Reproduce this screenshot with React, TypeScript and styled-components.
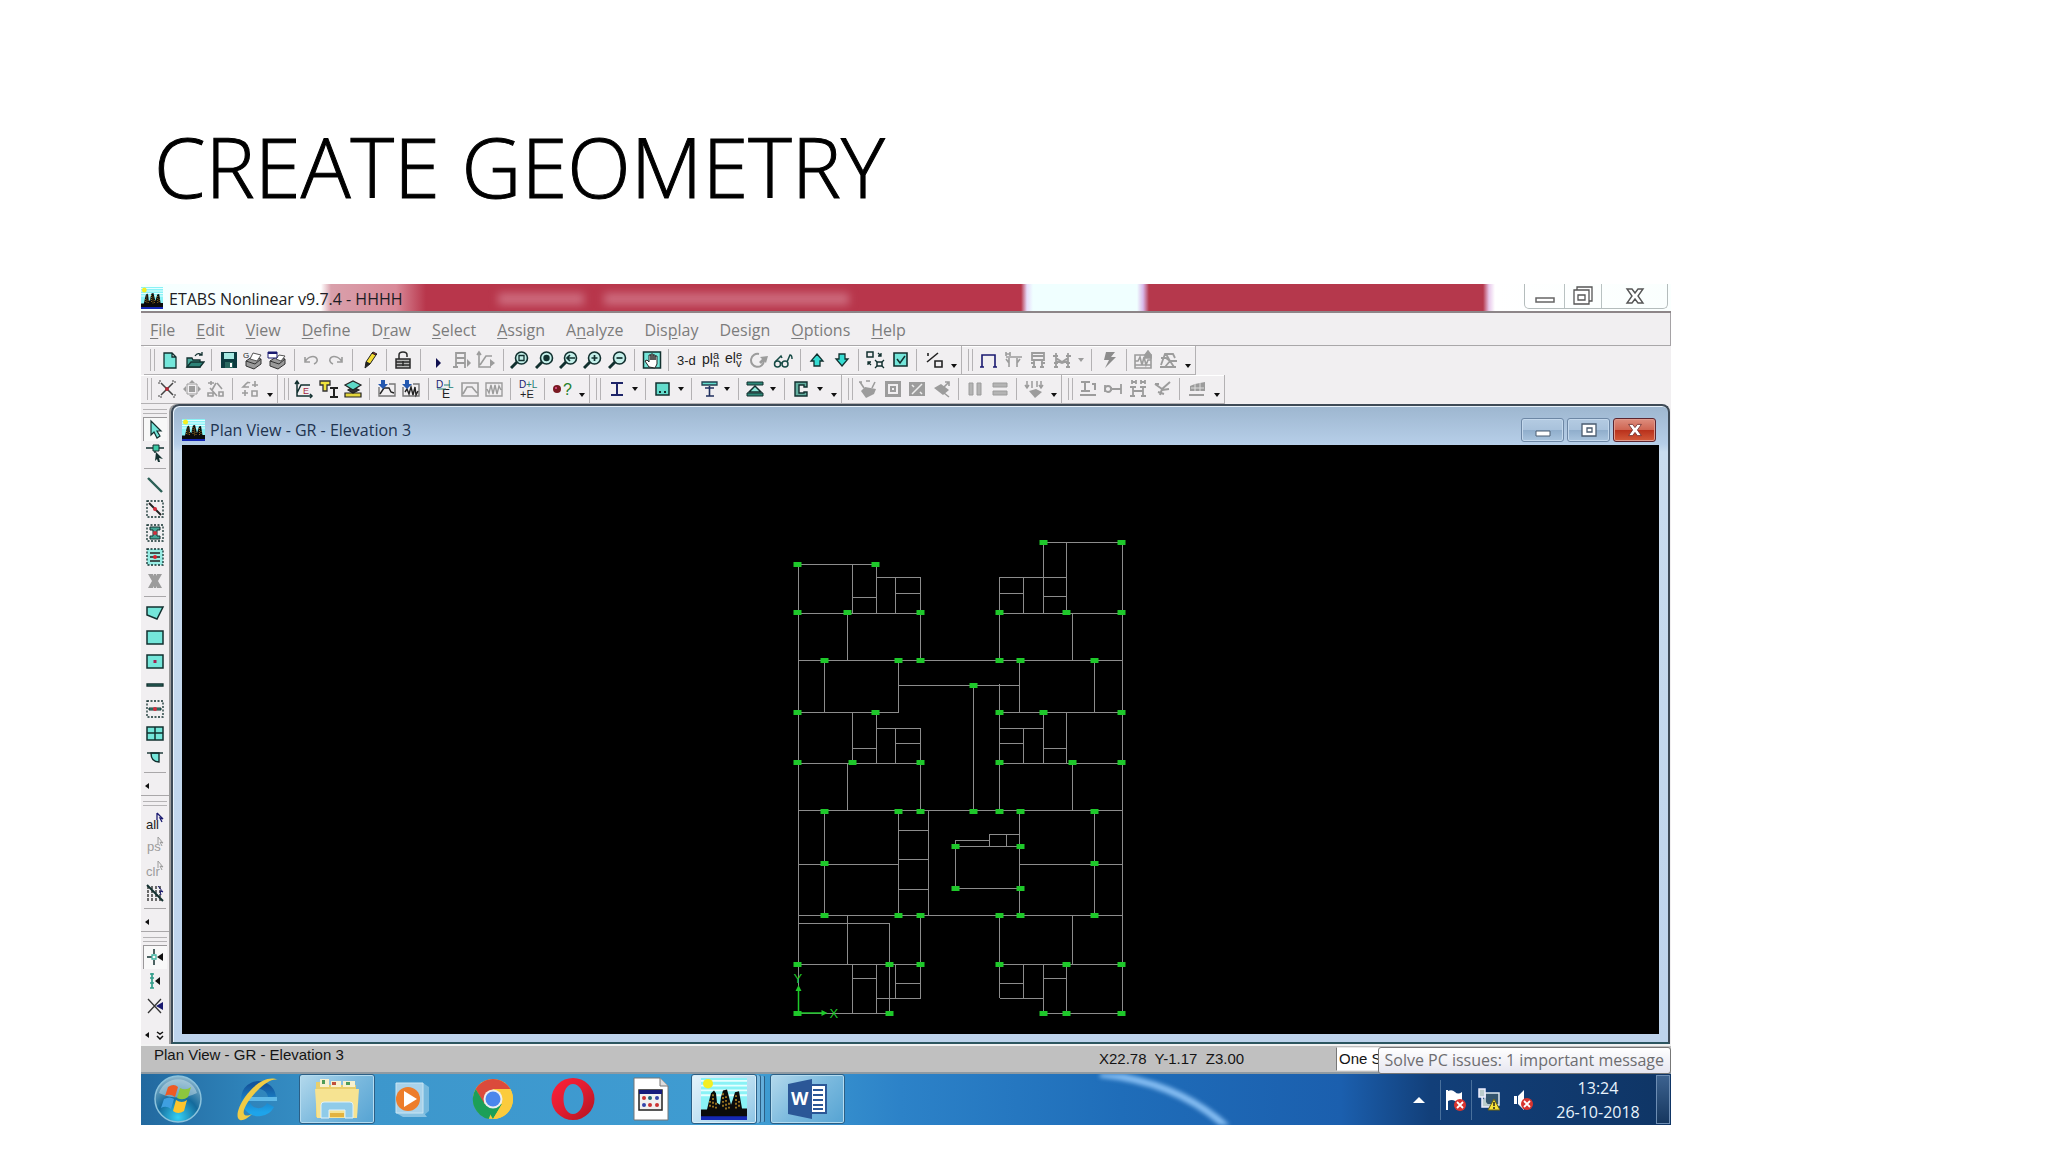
import React from 'react';
import styled, { createGlobalStyle, css } from 'styled-components';

const ui = '"Open Sans", "Noto Sans", sans-serif';
const classic = '"Liberation Sans", Arial, sans-serif';

const GlobalStyle = createGlobalStyle`
  *, *::before, *::after { box-sizing: border-box; }
  html, body { margin: 0; background: #fff; }
  body { font-family: ${ui}; color: #111; }
  button { font: inherit; color: inherit; margin: 0; padding: 0; border: 0; background: none; }
  svg { display: block; flex: none; }
`;

/* ---------- slide ---------- */

const Slide = styled.main`
  min-height: 100vh;
  padding: 106px 377px 26px 141px;
  background: #fff;
`;

const Heading = styled.h1`
  margin: 0 0 58px 13px;
  font-family: ${ui};
  font-weight: 300;
  font-size: 83px;
  line-height: 120px;
  color: #000;
  -webkit-text-stroke: 1px #000;
  white-space: nowrap;
`;

const Desktop = styled.section`
  display: flex;
  flex-direction: column;
`;

/* ---------- main window title ---------- */

const TitleBar = styled.header`
  position: relative;
  display: flex;
  align-items: center;
  height: 29px;
  border-bottom: 2px solid #8d8588;
  background: linear-gradient(
    90deg,
    #f4ffff 0,
    #fff 180px,
    #d9a0ab 190px,
    #d98a99 255px,
    #b8364b 285px,
    #b8364b 880px,
    #e6dcfa 886px,
    #f0ffff 892px,
    #f0ffff 996px,
    #d8b8ea 1002px,
    #b5384c 1008px,
    #b5384c 1342px,
    #e8c8ea 1348px,
    #fff 1354px,
    #fafffe 100%
  );
`;

const Ghosts = styled.div`
  position: absolute;
  left: 357px;
  top: 9px;
  display: flex;
  gap: 20px;
  filter: blur(4px);
`;

const Ghost = styled.span<{ $w: number }>`
  width: ${(p) => p.$w}px;
  height: 12px;
  background: #cd6c7e;
`;

const AppTitle = styled.span`
  position: relative;
  flex: 1;
  margin: 2px 0 0 6px;
  font-size: 16px;
  line-height: 24px;
  color: #1d1d24;
  white-space: nowrap;
`;

const WindowButtons = styled.div`
  position: relative;
  align-self: flex-start;
  display: flex;
  height: 25px;
  margin-right: 3px;
  border: 1px solid #b4bcbc;
  border-top: 0;
  border-radius: 0 0 5px 5px;
`;

const WindowButton = styled.button<{ $w: number }>`
  display: grid;
  place-items: center;
  width: ${(p) => p.$w}px;
  & + & { border-left: 1px solid #b9c2c2; }
`;

/* ---------- menu ---------- */

const MenuBar = styled.nav`
  display: flex;
  align-items: center;
  gap: 21px;
  height: 33px;
  padding: 2px 0 0 9px;
  background: #f1eff1;
  border-right: 1px solid #a5a2a5;
  border-bottom: 1px solid #a9a7a9;
`;

const MenuButton = styled.button`
  font-size: 16px;
  line-height: 24px;
  color: #7c7c7c;
  u { text-underline-offset: 2px; }
`;

/* ---------- toolbars ---------- */

const ToolRow = styled.div<{ $indent?: number }>`
  display: flex;
  height: 29px;
  padding-left: ${(p) => p.$indent || 0}px;
  background: #f1eff1;
`;

const Bar = styled.div<{ $w: number }>`
  display: flex;
  width: ${(p) => p.$w}px;
  border-right: 1px solid #b3b1b3;
  border-bottom: 1px solid #b3b1b3;
  box-shadow: inset 0 1px #fff;
`;

const Grip = styled.span`
  flex: none;
  width: 14px;
  margin: 3px 0;
  background:
    linear-gradient(#b5b3b5, #b5b3b5) 6px 0 / 1px 100% no-repeat,
    linear-gradient(#b5b3b5, #b5b3b5) 10px 0 / 1px 100% no-repeat;
`;

const Tools = styled.div`
  display: flex;
  flex: 1;
  min-width: 0;
`;

const ToolButton = styled.button`
  display: flex;
  align-items: center;
  justify-content: center;
  flex: 49 1 0;
  min-width: 0;
`;

const DropButton = styled.button`
  display: flex;
  align-items: center;
  justify-content: center;
  flex: 25 1 0;
  min-width: 0;
`;

const Divider = styled.span`
  flex: 19 1 0;
  margin: 3px 0;
  background: linear-gradient(#b3b1b3, #b3b1b3) center / 1px 100% no-repeat;
`;

const MoreButton = styled.button`
  display: flex;
  align-items: flex-end;
  justify-content: center;
  flex: none;
  width: 15px;
  padding-bottom: 6px;
`;

/* ---------- work area ---------- */

const Work = styled.div`
  display: flex;
  padding-right: 1px;
  background: #f1eff1;
`;

const SideBar = styled.aside`
  display: flex;
  flex-direction: column;
  width: 28px;
  flex: none;
`;

const SideGroup = styled.div<{ $last?: boolean }>`
  display: flex;
  flex-direction: column;
  ${(p) => (p.$last ? css`flex: 1;` : css`border-bottom: 1px solid #a9a7a9;`)}
`;

const SideGrip = styled.span`
  height: 13px;
  margin: 0 2px;
  background:
    linear-gradient(#b5b3b5, #b5b3b5) 0 5px / 100% 1px no-repeat,
    linear-gradient(#b5b3b5, #b5b3b5) 0 9px / 100% 1px no-repeat;
`;

const SideButton = styled.button<{ $on?: boolean }>`
  display: grid;
  place-items: center;
  height: 24px;
  margin: 0 2px;
  ${(p) => p.$on && css`background: #f8f8f8; box-shadow: inset 1px 1px #9a989a;`}
`;

const SideDivider = styled.span`
  height: 8px;
  margin: 0 3px;
  background: linear-gradient(#a9a7a9, #a9a7a9) 0 3px / 100% 1px no-repeat;
`;

const SideMore = styled.button<{ $bottom?: boolean }>`
  display: flex;
  align-items: center;
  gap: 7px;
  height: 18px;
  padding-left: 4px;
  ${(p) => p.$bottom && css`margin-top: auto;`}
`;

const Child = styled.section`
  display: flex;
  flex-direction: column;
  flex: 1;
  min-width: 0;
  margin-left: 2px;
  padding: 0 9px 8px 9px;
  border: 2px solid #3e4a56;
  border-bottom-color: #2c5660;
  border-radius: 8px 8px 0 0;
  box-shadow: inset 1px 1px #e7f2fb, -2px 0 #9b9b9b;
  background: linear-gradient(#9db6cf 0, #b6cee8 38px, #c9dcee 46px, #bdd3ec 100%);
`;

const ChildTitle = styled.header`
  display: flex;
  align-items: center;
  height: 39px;
  padding: 9px 3px 0 0;
`;

const ChildName = styled.h2`
  flex: 1;
  margin: 0 0 0 5px;
  font-size: 16px;
  font-weight: 400;
  line-height: 24px;
  color: #1f3450;
`;

const ChildButtons = styled.div`
  display: flex;
  gap: 3px;
`;

const ChildButton = styled.button<{ $close?: boolean }>`
  display: grid;
  place-items: center;
  width: 43px;
  height: 24px;
  border: 1px solid ${(p) => (p.$close ? '#5b2530' : '#6d87a5')};
  border-radius: 3px;
  box-shadow: inset 0 0 0 1px ${(p) => (p.$close ? '#e09a8c' : '#c4d8ec')};
  background: ${(p) =>
    p.$close
      ? 'linear-gradient(#dd8d7e 0, #cf6653 48%, #b8301b 50%, #d35a3a 100%)'
      : 'linear-gradient(#b4cbe2 0, #a9c2dc 48%, #8fadcb 50%, #a9c4de 100%)'};
`;

const Canvas = styled.div`
  height: 589px;
  background: #000;
  svg { width: 100%; height: 100%; }
`;

/* ---------- status bar ---------- */

const StatusBar = styled.footer`
  position: relative;
  display: flex;
  align-items: center;
  height: 30px;
  padding: 0 11px 0 13px;
  border-top: 2px solid #f2f2f2;
  border-bottom: 2px solid #8f9aa2;
  background: #c0c0c0;
  font-family: ${classic};
  font-size: 15px;
  line-height: 18px;
  color: #141414;
`;

const StatusText = styled.span`
  flex: 1;
  align-self: flex-start;
`;

const Coordinates = styled.output`
  width: 237px;
`;

const StorySelect = styled.select`
  width: 324px;
  height: 24px;
  padding: 0 2px;
  appearance: none;
  border: 1px solid #e8e8e8;
  border-left: 1px solid #777;
  border-radius: 0;
  background: #fff;
  font: inherit;
  color: inherit;
`;

const Tip = styled.div`
  position: absolute;
  right: 0;
  bottom: -2px;
  height: 27px;
  padding: 0 6px;
  border: 1px solid #777;
  border-radius: 3px;
  background: linear-gradient(#fff, #e6e6f0);
  font-family: ${ui};
  font-size: 16px;
  line-height: 24px;
  color: #6d6d70;
  white-space: nowrap;
`;

/* ---------- task bar ---------- */

const TaskBar = styled.footer`
  position: relative;
  display: flex;
  height: 51px;
  overflow: hidden;
  background: linear-gradient(90deg, #22699f 0, #2f84bb 110px, #3d97cc 230px, #3f9cd2 620px, #2c82c8 760px, #1f6db9 980px, #1b5fae 1200px, #123f79 1290px, #0f3565 100%);
`;

const Swoosh = styled.svg`
  position: absolute;
  left: 62%;
  top: 0;
  filter: blur(2px);
`;

const TaskButton = styled.button<{ $w: number; $open?: boolean; $stack?: boolean }>`
  position: relative;
  display: grid;
  place-items: center;
  width: ${(p) => p.$w}px;
  height: 50px;
  ${(p) =>
    p.$open &&
    css`
      border: 1px solid #2b5f86;
      border-radius: 3px;
      box-shadow: inset 0 0 0 1px #b5dcf0;
      background: linear-gradient(135deg, #b4d9ec 0, #7cbade 50%, #55a3d3 100%);
    `}
  ${(p) =>
    p.$stack &&
    css`
      margin-right: 13px;
      background: linear-gradient(135deg, #e4f3fa 0, #b7dcf0 60%, #8cc4e4 100%);
      box-shadow: inset 0 0 0 1px #d9eef8, 4px 0 0 -1px #7dbbe0, 5px 0 0 -1px #2b5f86, 9px 0 0 -2px #65aedb, 10px 0 0 -2px #2b5f86;
    `}
`;

const Tray = styled.div`
  display: flex;
  align-items: center;
  margin-left: auto;
`;

const TrayButton = styled.button<{ $w: number; $line?: boolean }>`
  display: grid;
  place-items: center;
  width: ${(p) => p.$w}px;
  height: 40px;
  ${(p) => p.$line && css`border-left: 1px solid #49709c; border-right: 1px solid #49709c;`}
`;

const Clock = styled.time`
  width: 116px;
  font-size: 16px;
  line-height: 24px;
  text-align: center;
  color: #e8f3fc;
`;

const ShowDesktop = styled.button`
  width: 14px;
  height: 49px;
  margin-right: 1px;
  border: 1px solid #6d8db3;
  background: linear-gradient(#3c628f, #16375f);
`;

/* ---------- icons ---------- */

const T = '#74e6da';
const K = '#12302f';
const G = '#9c9c9c';
const N = '#1a1a70';

const lens = (inner: React.ReactNode) => (
  <g>
    <path d="M7 12 1 18" stroke={K} strokeWidth="3" />
    <circle cx="11.500" cy="8" r="6" fill="#c4f0ea" stroke={K} strokeWidth="1.600" />
    {inner}
  </g>
);

const letters = (t: string, x: number, y: number, size: number, fill = '#222') => (
  <text x={x} y={y} fontSize={size} fill={fill} fontFamily="Liberation Sans, sans-serif">{t}</text>
);

const dots = (
  <rect x="2" y="2" width="16" height="16" fill="none" stroke={K} strokeWidth="1.300" strokeDasharray="2 1.500" />
);

const glyphs: Record<string, React.ReactNode> = {
  new: <path d="M4 3h8l4 4v11H4zM12 3v4h4" fill={T} stroke={K} strokeWidth="1.300" />,
  open: <g stroke={K} strokeWidth="1.300"><path d="M2 17V8h5l1 2h7v7z" fill="#48a99c" /><path d="m2 17 4-5h13l-4 5z" fill="#2d8277" /><path d="M10 6c2-3 5-3 7-1m0-3v3h-3" fill="none" /></g>,
  save: <g><path d="M2 2h16v16H2z" fill="#0c3b40" /><path d="M5 3h10v6H5z" fill="#a6e9e2" /><path d="M6 12h8v6H6z" fill="#29675f" /><path d="M11 13h2v4h-2z" fill="#fff" /></g>,
  printG: <g><path d="m3 11 6-4 9 2v5l-7 5-8-3z" fill="#999" stroke="#333" /><path d="m7 9 3-6 8 2-4 6z" fill="#fff" stroke="#555" /><path d="m3 11 9 3 6-5" fill="none" stroke="#333" />{letters('G', 0, 8, 8)}</g>,
  print2: <g><path d="m3 11 6-4 9 2v5l-7 5-8-3z" fill="#999" stroke="#333" /><path d="m9 9 3-4 6 1-4 5z" fill="#fff" stroke="#555" /><path d="m3 11 9 3 6-5" fill="none" stroke="#333" /><path d="M1 2h9v6H1z" fill="#fff" stroke={N} /><path d="M1 2h9v2H1z" fill={N} /></g>,
  undo: <path d="M4 7v5h5M4 12c3-6 10-7 12-3 1 3-1 4-3 5" fill="none" stroke={G} strokeWidth="1.600" />,
  redo: <path d="M16 7v5h-5M16 12c-3-6-10-7-12-3-1 3 1 4 3 5" fill="none" stroke={G} strokeWidth="1.600" />,
  pencil: <g stroke="#222"><path d="m6 12 6-9 4 2-6 9z" fill="#f4dc32" /><path d="m12 3 1-1 4 2-1 1z" fill="#d33" /><path d="m6 12-1 6 5-4z" fill="#222" /></g>,
  lock: <g fill="none" stroke="#2a2a2a" strokeWidth="1.500"><path d="M6 9V5q0-3 4-3t4 3v2" /><path d="M3 9h14v9H3z" fill="#b8b8b8" /><path d="M3 12h14M3 15h14M10 11v5" /></g>,
  run: <path d="m9 8 5 5-5 5z" fill="#101050" />,
  runFrame: <g fill="none" stroke={G} strokeWidth="1.800"><path d="M4 18V3h9v15M4 8h9M4 13h9M1 17h5" /><path d="m15 9 4 4-4 4z" fill={G} strokeWidth="0" /></g>,
  runCurve: <g fill="none" stroke={G} strokeWidth="1.600"><path d="M3 3v14h12M4 15 10 6h6M1 5l2-3 2 3" /><path d="m14 9 5 4-5 4z" fill={G} strokeWidth="0" /></g>,
  zoomBox: lens(<path d="M9 5.500h5v5H9z" fill="none" stroke={K} strokeWidth="1.300" />),
  zoomFull: lens(<circle cx="11.500" cy="8" r="3.200" fill={K} />),
  zoomBack: lens(<path d="M16 8H8m3-3L8 8l3 3" fill="none" stroke={K} strokeWidth="1.700" />),
  zoomIn: lens(<path d="M11.500 5v6M8.500 8h6" stroke={K} strokeWidth="1.700" />),
  zoomOut: lens(<path d="M8.500 8h6" stroke={K} strokeWidth="1.700" />),
  hand: <g><path d="M1.500 2h17v16h-17z" fill={T} stroke={K} strokeWidth="1.500" /><path d="M7 17 3 11l2-1 2 2V5h2v5-6h2v6-5h2v5-4h2v8l-2 4z" fill="#fff" stroke="#222" /></g>,
  threeD: letters('3-d', 1, 15, 13),
  plan: <g>{letters('pl', 2, 14, 14)}{letters('a', 13, 9, 11)}{letters('n', 13, 17, 11)}</g>,
  elev: <g>{letters('el', 1, 13, 14)}{letters('e', 12, 9, 11)}{letters('v', 12, 17, 11)}</g>,
  rotate: <g><path d="M10 4a6.500 6.500 0 1 0 5 7" fill="none" stroke={G} strokeWidth="2" /><path d="m10 12 3-3-2-2 8-1-2 7-2-2-3 3z" fill={G} /></g>,
  glasses: <g fill="none" stroke="#174b46" strokeWidth="1.500"><circle cx="4.500" cy="14" r="3" /><circle cx="12" cy="14" r="3" /><path d="M7 13h3M2 12l6-6 1 2M14 12l3-7q2 0 2 4" /></g>,
  up: <path d="m10 4 6 7h-3v5H7v-5H4z" fill="#35dcd2" stroke={K} strokeWidth="1.300" />,
  down: <path d="m10 16 6-7h-3V4H7v5H4z" fill="#35dcd2" stroke={K} strokeWidth="1.300" />,
  shrink: <g fill="none" stroke={K} strokeWidth="1.500"><path d="M2 2h6v5H2zM12 12h5v4h-5z" /><path d="m13 3 3 3m0-3v3h-3M6 15l-3-3m0 3v-3h3M12 12l-2-2M17 16l2 2M12 16l-2 2M17 12l2-2" strokeWidth="1.300" /></g>,
  check: <g><path d="M4 3h13v13H4z" fill={T} stroke={K} strokeWidth="1.600" /><path d="m7 9 3 4 5-7" fill="none" stroke={K} strokeWidth="1.500" /></g>,
  assign: <g fill="none" stroke="#222" strokeWidth="1.600"><path d="M3 12 14 3M4 3v3M11 11h7v6h-7z" /></g>,
  portal: <path d="M4 17V5h13v12M2 17h4M15 17h4" fill="none" stroke={N} strokeWidth="1.600" />,
  table: <path d="M3 2v4M7 2v4M3 4h4M3 7h16M6 8v9M14 8v9M3 9l3 4M17 9l-3 4" fill="none" stroke={G} strokeWidth="1.600" />,
  frame2: <path d="M4 3h12v7H4zM6 10v7M14 10v7M4 6h12M3 13h4M13 13h4M4 17h4M12 17h4" fill="none" stroke={G} strokeWidth="1.800" />,
  frame3: <path d="M4 3v15M16 3v15M4 8l6 4 6-4M4 11l6 2 6-2M1 6h5M14 6h5M2 13h4M14 13h4M2 17h4M14 17h4" fill="none" stroke={G} strokeWidth="1.800" />,
  bolt: <path d="M7 2h9l-4 5h5L6 18l4-8H5z" fill="#8c8c8c" />,
  wave: <g fill="none" stroke={G} strokeWidth="1.600"><path d="M2 5h16v13H2zM2 11h3l2-4 2 8 2-8 2 8 2-5h3M2 15h16" /><path d="m12 5 3-4 3 4v3h-6z" fill={G} /></g>,
  wave2: <path d="M2 17h16M3 15 7 4h8l2 4M3 8h5l4 3-5 6M8 4l4 7 4 6M12 11h7" fill="none" stroke={G} strokeWidth="1.800" />,
  snapX: <g><path d="m4 4 12 12M16 4 4 16" stroke="#444" strokeWidth="1.500" /><path d="M2 5V2h3M15 2h3v3M18 15v3h-3M5 18H2v-3" fill="none" stroke="#444" strokeDasharray="2 1" /><circle cx="10" cy="10" r="2" fill="#b32a36" /></g>,
  grayMove: <g fill={G}><path d="M7 7h6v6H7zM10 1l3 3H7zM10 19l3-3H7zM1 10l3-3v6zM19 10l-3-3v6z" /><path d="M5 5h10v10H5z" fill="none" stroke={G} /></g>,
  grayTri: <path d="M2 4h6M5 2v4M4 9l7 8M10 4l-4 7M11 4l5 6M13 13h4v4h-4zM2 14h5v3H2z" fill="none" stroke={G} strokeWidth="1.600" />,
  graySwap: <path d="M8 3 3 8h6M4 8c2-5 5-5 6-4M2 14h6M5 11v6M15 2v6M12 6h6M12 12h5v5h-5z" fill="none" stroke={G} strokeWidth="1.600" />,
  curveE: <g fill="none" stroke={K} strokeWidth="1.500"><path d="M3 3v14h15M3 14 7 6h9M1 5l2-3 2 3" /><g strokeWidth="0">{letters('E', 9, 15, 9, '#a31f40')}</g><path d="m16 15 2 2-2 2" /></g>,
  sectionTI: <g strokeWidth="1.300"><path d="M1 2h10v4H8v6H4V6H1z" fill="#f0e33c" stroke="#333" /><path d="M11 9h8M11 18h8M15 9v9" stroke="#222" strokeWidth="2" /></g>,
  slab: <g stroke="#222" strokeWidth="1.200"><path d="M2 14h16v4H2z" fill="#e4d63c" /><path d="m5 11 5 3 6-3-6-3z" fill="#333" /><path d="m2 6 8-4 8 4-8 5z" fill="#5ed8c7" /></g>,
  resp: <g fill="none" stroke="#222" strokeWidth="1.400"><path d="M2 8v9h16V5h-6" stroke="#777" /><path d="m3 15 4-6h5l2 4 3 1" /><path d="M4 1h4v4h3L6 10 1 5h3z" fill="#2458b0" stroke="none" /></g>,
  timeh: <g fill="none" stroke="#222" strokeWidth="1.400"><path d="M2 8v9h16V5h-6" stroke="#777" /><path d="m4 13 2-3 2 5 2-7 2 8 2-8 1 8 2-4" /><path d="M4 1h4v4h3L6 10 1 5h3z" fill="#2458b0" stroke="none" /></g>,
  loadDE: <g>{letters('D', 1, 9, 10, N)}{letters('L', 13, 9, 10, '#237f75')}{letters('E', 7, 19, 12)}<path d="M2 10h9M9 6h6" stroke="#237f75" /></g>,
  grayCurve: <path d="M2 4h16v13H2zM3 15l4-7h5l5 6" fill="none" stroke={G} strokeWidth="1.600" />,
  grayWave: <path d="M2 4h16v13H2zM3 10l2 4 2-8 2 9 2-9 2 9 2-8 2 4" fill="none" stroke={G} strokeWidth="1.400" />,
  combo: <g>{letters('D', 1, 9, 10, N)}{letters('+L', 8, 9, 10, '#237f75')}{letters('+E', 2, 19, 11)}</g>,
  help: <g><circle cx="5" cy="10" r="4" fill="#7a1a22" /><circle cx="4" cy="9" r="1" fill="#e59" />{letters('?', 11, 16, 16, '#27802b')}</g>,
  iBeam: <path d="M5 4h12M5 16h12M11 4v12" stroke="#1d2468" strokeWidth="2" fill="none" />,
  column: <g><path d="M4 4h13v12H4z" fill="#63dccc" stroke={K} strokeWidth="1.500" /><path d="M7 12h2v2H7zM12 12h2v2h-2z" fill={K} /></g>,
  tee: <g stroke="#20404f" strokeWidth="1.300"><path d="M3 3h15v3H3z" fill="#63dccc" /><path d="M10.500 7v10M7 17h8M6 9h9" stroke="#20305f" strokeWidth="1.600" /></g>,
  truss: <g><path d="M2 3h16v3H2zM2 14h16v3H2z" fill="#2f8878" stroke={K} /><path d="m4 13 6-6 6 6z" fill="#8fe7d8" stroke={K} strokeWidth="1.500" /></g>,
  channel: <path d="M16 3H4v14h12v-4h-3v1H8V6h5v2h3z" fill="#63ae9f" stroke={K} strokeWidth="1.400" />,
  shellMesh: <g fill={G}><path d="m3 12 4-4 11 2-2 5-8 4z" /><path d="m2 3 4 6M8 2h4M17 3l-3 6M1 3h3" stroke={G} strokeWidth="1.600" /></g>,
  shellBox: <g fill="none" stroke={G}><path d="M3.500 3.500h13v13h-13z" strokeWidth="3" /><path d="M8 8h4v4H8z" strokeWidth="2" /></g>,
  shellCross: <g><path d="M2 3h16v14H2z" fill={G} /><path d="m5 15 10-10M5 6l2 2M13 13l2 2" stroke="#eee" strokeWidth="1.500" /></g>,
  shellLocal: <g fill={G}><path d="m2 9 7-4 8 6-6 5z" /><path d="m12 8 5-5m-4 0h4v4M12 14l5 4" stroke={G} strokeWidth="1.600" fill="none" /></g>,
  pier: <path d="M4 4h4v12H4zM12 4h4v12h-4z" fill="#b4b4b4" stroke={G} />,
  spandrel: <path d="M3 4h14v4H3zM3 12h14v4H3z" fill="#b4b4b4" stroke={G} />,
  shellLoad: <g fill={G}><path d="m5 12 7-2 6 3-7 6z" /><path d="M3 2v7M8 2v7M13 2v6M17 2v6M1 6l2 3 2-3M15 6l2 3 2-3" fill="none" stroke={G} strokeWidth="1.500" /></g>,
  iRelease: <path d="M3 3h9M3 12h9M7 3v9M14 5h3v6M2 16h16" fill="none" stroke={G} strokeWidth="2" />,
  hinge: <g fill="none" stroke={G} strokeWidth="1.800"><path d="M2 6v7M18 5v10M8 10h10M8 8v4" /><circle cx="5" cy="10" r="3" /></g>,
  offset: <path d="M5 7v11M15 7v11M5 12h10M2 8h6M12 8h6M2 17h5M13 17h5M4 1v4M8 1v4M4 3h4M13 1v4M17 1v4M13 3h4" fill="none" stroke={G} strokeWidth="1.800" />,
  axes: <path d="m3 5 7 5M18 3l-8 7-2 6M10 11l7-1M6 13l6 2M3 5h4" fill="none" stroke={G} strokeWidth="2" />,
  steps: <g><path d="M3 12V7l5-2 10-2v9z" fill={G} /><path d="M2 16h15" stroke={G} strokeWidth="2" /><path d="M4 9h13M8 5v7M13 4v8" stroke="#ddd" /></g>,
  pointer: <path d="M6 2v14l3-3 3 6 3-2-3-5h4z" fill={T} stroke={K} strokeWidth="1.200" />,
  reshape: <g><path d="M1 5h18M10 5v5" stroke={K} strokeWidth="1.500" /><path d="M8 2h6v6H8z" fill="#3cc9a5" stroke={K} /><path d="m11 9 7 7-4-1 1 4h-2l-1-3-2 2z" fill={K} /></g>,
  line: <path d="M3 3 17 17" stroke="#2b5f56" strokeWidth="2.400" />,
  lineBox: <g>{dots}<path d="M4 4 16 16" stroke="#222" strokeWidth="2" /><circle cx="10" cy="10" r="2" fill="#d22d3c" /></g>,
  colBox: <g>{dots}<path d="M5 4h10v3h-3v6h3v3H5v-3h3V7H5z" fill="#45a797" stroke={K} /><circle cx="10" cy="10" r="2" fill="#d22d3c" /></g>,
  beamBox: <g><path d="M2 2h16v16H2z" fill="#98ece4" />{dots}<path d="M5 6h10M5 10h10M5 14h10" stroke="#222" strokeWidth="1.300" /><circle cx="10" cy="10" r="2" fill="#e01e2f" /></g>,
  brace: <path d="M3 3h5l2 4 2-4h5l-4 7 4 7h-5l-2-4-2 4H3l4-7zM9 3h2v14H9z" fill={G} />,
  poly: <path d="M2 4h16l-6 12-10-4z" fill={T} stroke={K} strokeWidth="1.500" />,
  rect: <path d="M2 4h16v13H2z" fill={T} stroke={K} strokeWidth="1.500" />,
  rectDot: <g><path d="M2 4h16v13H2z" fill={T} stroke={K} strokeWidth="1.500" /><path d="M8.500 9h3v3h-3z" fill="#a32052" /></g>,
  wall: <path d="M2 9h16v2H2z" fill="#45a797" stroke={K} strokeWidth="1.300" />,
  wallBox: <g>{dots}<path d="M4 9h12v2H4z" fill="#45a797" stroke={K} /><circle cx="10" cy="10" r="2" fill="#d22d3c" /></g>,
  windows: <path d="M2 4h16v13H2zM10 4v13M2 10h16" fill={T} stroke={K} strokeWidth="1.500" />,
  opening: <g stroke={K} strokeWidth="1.400"><path d="M6 6h8v9c-5 0-8-3-8-9z" fill={T} /><path d="M2 6h16" /></g>,
  all: <g>{letters('all', 1, 18, 13)}<path d="m12 2 6 6-3-1 2 4M12 2v7" fill="none" stroke={N} strokeWidth="1.300" /></g>,
  ps: <g>{letters('ps', 2, 16, 13, G)}<path d="m13 2 5 6-3-1 2 4M13 2v7" fill="none" stroke={G} /></g>,
  clr: <g>{letters('clr', 1, 17, 13, G)}<path d="m13 2 5 6-3-1 2 4M13 2v7" fill="none" stroke={G} /></g>,
  lineSel: <g><path d="M3 3v15M7 3v15M11 3v15M15 3v15" stroke="#222" strokeWidth="1.300" strokeDasharray="3 1" /><path d="m2 2 16 16" stroke={K} strokeWidth="2" /><path d="m13 3 5 6-3-1 1 4" fill="none" stroke={N} /></g>,
  snap1: <g><path d="M2 10h5M9 2v5M9 13v5" stroke={K} strokeWidth="1.500" /><path d="M7 8h4v4H7z" fill="none" stroke="#3bb29f" strokeWidth="1.300" /><path d="m12 10 6-4v8z" fill="#101010" /></g>,
  snap2: <g><path d="M7 2v15M5 3h4M5 7h4M5 12h4M5 17h4" stroke="#329d8a" strokeWidth="1.700" /><path d="m10 10 5-4v8z" fill="#101010" /></g>,
  snap3: <g><path d="M3 4 16 18M3 18 16 4" stroke="#333" strokeWidth="1.300" /><path d="m11 11 7-4v8z" fill={N} /></g>,
};

const Glyph = ({ name }: { name: string }) => (
  <svg width="20" height="20" viewBox="0 0 20 20" aria-hidden="true" fill="none">{glyphs[name]}</svg>
);

const Caret = ({ gray }: { gray?: boolean }) => (
  <svg width="6" height="4" viewBox="0 0 6 4" aria-hidden="true"><path d="M0 0h6L3 4z" fill={gray ? G : '#111'} /></svg>
);

const Tool = ({ name }: { name: string }) => {
  if (name === '|') return <Divider />;
  if (name === 'v' || name === 'vg') return <DropButton aria-label="Options"><Caret gray={name === 'vg'} /></DropButton>;
  return <ToolButton aria-label={name}><Glyph name={name} /></ToolButton>;
};

const ToolBarGroup = ({ width, items }: { width: number; items: string }) => (
  <Bar $w={width} role="toolbar">
    <Grip />
    <Tools>{items.split(' ').map((n, i) => <Tool key={i} name={n} />)}</Tools>
    <MoreButton aria-label="More"><Caret /></MoreButton>
  </Bar>
);

const SideItems = ({ items, active }: { items: string; active?: string }) => (
  <>
    {items.split(' ').map((n, i) =>
      n === '|' ? <SideDivider key={i} /> : (
        <SideButton key={i} aria-label={n} $on={n === active}><Glyph name={n} /></SideButton>
      ),
    )}
  </>
);

const LeftCaret = () => (
  <svg width="4" height="6" viewBox="0 0 4 6" aria-hidden="true"><path d="M4 0v6L0 3z" fill="#111" /></svg>
);

const AppIcon = ({ w, h }: { w: number; h: number }) => (
  <svg width={w} height={h} viewBox="0 0 46 44" preserveAspectRatio="none" aria-hidden="true">
    <path d="M0 0h46v44H0z" fill="#8af2f6" />
    <path d="M0 3h46M0 8h46M0 13h46M0 18h46" stroke="#e6ffff" strokeWidth="2" />
    <circle cx="7" cy="6" r="5" fill="#f3ee22" />
    <path d="M0 42v-9h6l2-9 2-8 3-3 2 3 1 10 3 2 1-8 2-7 4-1 2 8 2 8 2-6 2-7 4-1 1 6 2 12h5v9z" fill="#0b0b0b" />
    <path d="M9 24v8M12 17v16M15 26v7M22 16v16M25 19v14M28 26v7M35 18v14M38 24v8" stroke="#c0902a" strokeWidth="1.500" strokeDasharray="2 2" />
    <path d="M0 40h46v4H0z" fill="#1428b4" />
  </svg>
);

/* ---------- plan drawing ---------- */

const horizontals: number[][] = [
  [564, 798, 876], [597, 852, 876], [577, 876, 920], [593, 895, 920], [613, 798, 920],
  [542, 1043, 1122], [577, 999, 1066], [593, 999, 1023], [596, 1043, 1066], [613, 999, 1122],
  [660, 798, 1122], [685, 898, 1019], [712, 798, 898], [712, 999, 1122],
  [748, 852, 876], [728, 876, 920], [743, 895, 920], [763, 798, 920],
  [728, 999, 1043], [743, 999, 1023], [748, 1043, 1066], [763, 999, 1122],
  [810, 798, 1122], [830, 898, 928], [859, 898, 928], [889, 898, 928], [864, 798, 898], [864, 1019, 1122],
  [840, 955, 989], [834, 989, 1019], [846, 955, 1019], [888, 955, 1019],
  [915, 798, 1122], [923, 798, 889], [964, 798, 920], [978, 852, 876], [983, 895, 920], [998, 876, 920], [1013, 798, 889],
  [964, 999, 1122], [983, 999, 1023], [998, 999, 1043], [978, 1043, 1066], [1013, 1043, 1122],
];

const verticals: number[][] = [
  [798, 564, 1013], [1122, 542, 1013],
  [852, 564, 613], [876, 564, 613], [895, 577, 613], [920, 577, 660], [847, 613, 660],
  [1043, 542, 613], [1066, 542, 613], [1023, 577, 613], [999, 577, 660], [1072, 613, 660],
  [824, 660, 712], [898, 660, 712], [1019, 660, 712], [1094, 660, 712], [973, 685, 810], [999, 684, 810],
  [852, 712, 763], [876, 712, 763], [895, 728, 763], [920, 728, 810], [847, 763, 810],
  [1023, 728, 763], [1043, 712, 763], [1066, 712, 763], [1072, 763, 810],
  [824, 810, 915], [898, 810, 915], [928, 810, 915], [1019, 810, 915], [1094, 810, 915],
  [955, 840, 888], [989, 834, 846], [1006, 834, 846],
  [847, 915, 964], [889, 923, 1013], [920, 915, 998], [852, 964, 1013], [876, 964, 1013], [895, 964, 998],
  [999, 915, 998], [1072, 915, 964], [1023, 964, 998], [1043, 964, 1013], [1066, 964, 1013],
];

const columnsByLevel: [number, number[]][] = [
  [542, [1043, 1121]],
  [564, [797, 875]],
  [612, [797, 847, 920, 999, 1066, 1121]],
  [660, [824, 898, 920, 999, 1020, 1094]],
  [685, [973]],
  [712, [797, 875, 999, 1043, 1121]],
  [762, [797, 852, 920, 999, 1072, 1121]],
  [811, [824, 898, 920, 973, 999, 1020, 1094]],
  [846, [955, 1020]],
  [863, [824, 1094]],
  [888, [955, 1020]],
  [915, [824, 898, 920, 999, 1020, 1094]],
  [964, [797, 889, 920, 999, 1066, 1121]],
  [1013, [797, 889, 1043, 1066, 1121]],
];

const PlanDrawing = () => (
  <svg viewBox="182 445 1476 589" role="img" aria-label="Plan view">
    <g stroke="#8c8c8c" strokeWidth="1" shapeRendering="crispEdges">
      {horizontals.map(([y, a, b], i) => <path key={i} d={`M${a} ${y}H${b}`} />)}
      {verticals.map(([x, a, b], i) => <path key={i} d={`M${x} ${a}V${b}`} />)}
    </g>
    <g fill="#1ec82a">
      {columnsByLevel.map(([y, xs]) => xs.map((x) => <rect key={`${x}-${y}`} x={x - 4} y={y - 2} width="8" height="5" />))}
    </g>
    <g stroke="#1ec82a" fill="#1ec82a" strokeWidth="1.500">
      <path d="M798 1013V988M798 1013H825" />
      <path d="m798 985 3 6h-6zM827 1013l-6-3v6z" strokeWidth="0" />
    </g>
    <g fill="#1ec82a" fontSize="13" fontFamily="Liberation Sans, sans-serif">
      <text x="793" y="983">Y</text>
      <text x="829" y="1018">X</text>
    </g>
  </svg>
);

/* ---------- task bar pictures ---------- */

const StartOrb = () => (
  <svg width="50" height="50" viewBox="0 0 50 50" aria-hidden="true">
    <defs>
      <radialGradient id="orb" cx="50%" cy="90%" r="90%">
        <stop offset="0" stopColor="#35d0f4" /><stop offset=".5" stopColor="#146a9c" /><stop offset="1" stopColor="#8fb9cf" />
      </radialGradient>
    </defs>
    <circle cx="25" cy="25" r="23" fill="url(#orb)" stroke="#8cc3dc" strokeWidth="1.500" />
    <path d="M6 19a20 20 0 0 1 38 0q-19 9-38 0z" fill="#d5e6ee" opacity=".45" />
    <path d="M15 13q6-4 10 0l-3 10q-5-4-10-1z" fill="#ee5a24" />
    <path d="M27 14q6 3 11-1l-3 10q-5 4-11 1z" fill="#8cc63e" />
    <path d="M11 25q6-3 10 0l-3 10q-5-4-10-1z" fill="#3f9fe0" />
    <path d="M23 26q6 4 11 0l-3 11q-6 4-11 0z" fill="#fdc52c" />
  </svg>
);

const IeIcon = () => (
  <svg width="46" height="46" viewBox="0 0 46 46" aria-hidden="true" fill="none">
    <defs><linearGradient id="ie" x1="0" y1="0" x2="0" y2="1"><stop offset="0" stopColor="#14559c" /><stop offset="1" stopColor="#1ea4ea" /></linearGradient></defs>
    <path d="M36.500 29A13.500 13.500 0 1 1 38 21" stroke="url(#ie)" strokeWidth="8" />
    <path d="M14 23h29" stroke="#5fb9e8" strokeWidth="4" />
    <path d="M44 4C34-1 20 8 11 21 4 31 1 42 6 44c3 1 8-2 12-6-4 2-7 2-8 0-2-4 5-15 13-23S39 2 44 4z" fill="#f0cb45" />
  </svg>
);

const ExplorerIcon = () => (
  <svg width="46" height="42" viewBox="0 0 46 42" aria-hidden="true">
    <path d="M2 4h9l2 3h29v32H2z" fill="#e9cf6c" />
    <path d="M6 1h9v8H6zM17 3h10v6H17zM29 3h12v6H29z" fill="#f8f1cf" />
    <path d="M8 2h3v4H8zM32 4h4v3h-4z" fill="#4f9b57" /><path d="M18 4h4v3h-4z" fill="#c0503c" />
    <path d="M1 11h44l-2 29H3z" fill="#f6e391" />
    <path d="M7 40V27q0-3 3-3h26q3 0 3 3v13h-8v-8H15v8z" fill="#8fcbe9" stroke="#dff1fa" />
    <path d="M16 35h14v4H16z" fill="#e2b23e" />
  </svg>
);

const MediaIcon = () => (
  <svg width="36" height="38" viewBox="0 0 36 38" aria-hidden="true">
    <path d="m28 3 6 4v24l-6 5z" fill="#76b9de" /><path d="M1 33h28l3 4H8z" fill="#88c2e2" />
    <path d="M1 3h27v30H1z" fill="#a8d2ea" stroke="#c9e5f3" />
    <circle cx="13" cy="19" r="12" fill="#ed7d2b" /><path d="m9 11 13 8-13 8z" fill="#fff" />
  </svg>
);

const ChromeIcon = () => (
  <svg width="42" height="42" viewBox="0 0 42 42" aria-hidden="true">
    <circle cx="21" cy="21" r="20" fill="#fbcb3d" />
    <path d="M3.700 11A20 20 0 0 1 38.300 11H21L12 26z" fill="#db4a3b" />
    <path d="m3.700 11 9 15 8 5-4 10A20 20 0 0 1 3.700 11z" fill="#1c9f58" />
    <path d="M12 26 21 41l9-15z" fill="#1c9f58" />
    <path d="M21 11h17.300A20 20 0 0 1 21 41l9-15z" fill="#fbcb3d" />
    <circle cx="21" cy="21" r="9.500" fill="#eee" /><circle cx="21" cy="21" r="7.500" fill="#4a86ec" />
  </svg>
);

const OperaIcon = () => (
  <svg width="44" height="44" viewBox="0 0 44 44" aria-hidden="true">
    <defs><linearGradient id="op" x1="0" x2="1" y1="0" y2="1"><stop offset="0" stopColor="#ff2038" /><stop offset=".5" stopColor="#e01c30" /><stop offset="1" stopColor="#b01420" /></linearGradient></defs>
    <path fillRule="evenodd" d="M22 1a21.500 21 0 1 1 0 42 21.500 21 0 1 1 0-42zm0 6c-6 0-9.500 7-9.500 15S16 37 22 37s10.500-7 10.500-15S28 7 22 7z" fill="url(#op)" />
  </svg>
);

const FileIcon = () => (
  <svg width="36" height="44" viewBox="0 0 36 44" aria-hidden="true">
    <path d="M1 1h26l8 8v34H1z" fill="#fff" stroke="#777" /><path d="M27 1v8h8" fill="#ddd" stroke="#777" />
    <path d="M6 13h23v20H6z" fill="#f0f0f0" stroke="#222" strokeWidth="1.500" /><path d="M6 13h23v4H6z" fill="#151b7c" />
    <g><circle cx="11" cy="21" r="2" fill="#c33" /><circle cx="17" cy="21" r="2" fill="#267" /><circle cx="24" cy="21" r="2" fill="#34a" /><circle cx="11" cy="28" r="2" fill="#34a" /><circle cx="17" cy="28" r="2" fill="#c33" /><circle cx="24" cy="28" r="2" fill="#c33" /></g>
  </svg>
);

const WordIcon = () => (
  <svg width="42" height="40" viewBox="0 0 42 40" aria-hidden="true">
    <path d="M24 6h15v28H24z" fill="#fff" stroke="#2b5797" strokeWidth="2" />
    <path d="M26 11h10M26 16h10M26 21h10M26 26h10M26 30h10" stroke="#2b5797" strokeWidth="2" />
    <path d="m1 5 24-5v40L1 35z" fill="#2b5797" />
    <text x="4" y="26" fontSize="18" fontWeight="700" fill="#fff" fontFamily="Open Sans, sans-serif">W</text>
  </svg>
);

const Alert = ({ x, y }: { x: number; y: number }) => (
  <g><circle cx={x} cy={y} r="6" fill="#d8342f" /><path d={`M${x - 3} ${y - 3}l6 6m0-6-6 6`} stroke="#fff" strokeWidth="1.800" /></g>
);

const menus: [string, string, string][] = [
  ['', 'F', 'ile'], ['', 'E', 'dit'], ['', 'V', 'iew'], ['', 'D', 'efine'], ['D', 'r', 'aw'], ['', 'S', 'elect'],
  ['', 'A', 'ssign'], ['A', 'n', 'alyze'], ['Dis', 'p', 'lay'], ['Desi', 'g', 'n'], ['', 'O', 'ptions'], ['', 'H', 'elp'],
];

export default function App() {
  return (
    <>
      <GlobalStyle />
      <Slide>
        <Heading>CREATE GEOMETRY</Heading>
        <Desktop>
          <TitleBar>
            <Ghosts aria-hidden="true"><Ghost $w={86} /><Ghost $w={245} /></Ghosts>
            <AppIcon w={22} h={22} />
            <AppTitle>ETABS Nonlinear v9.7.4 - HHHH</AppTitle>
            <WindowButtons>
              <WindowButton $w={39} aria-label="Minimize">
                <svg width="20" height="20" viewBox="0 0 20 20"><path d="M1 12h18v4H1z" fill="#fff" stroke="#666" strokeWidth="1.500" /></svg>
              </WindowButton>
              <WindowButton $w={37} aria-label="Restore">
                <svg width="20" height="20" viewBox="0 0 20 20" fill="#fff" stroke="#555" strokeWidth="1.300"><path d="M4 1h15v14H4z" /><path d="M1 4h15v14H1z" /><path d="M5 9h7v5H5z" /></svg>
              </WindowButton>
              <WindowButton $w={66} aria-label="Close">
                <svg width="20" height="20" viewBox="0 0 20 20"><path d="M2 3h5l3 4 3-4h5l-5 7 5 7h-5l-3-4-3 4H2l5-7z" fill="#fff" stroke="#555" strokeWidth="1.400" /></svg>
              </WindowButton>
            </WindowButtons>
          </TitleBar>

          <MenuBar>
            {menus.map(([a, key, b]) => <MenuButton key={a + key + b}>{a}<u>{key}</u>{b}</MenuButton>)}
          </MenuBar>

          <ToolRow $indent={3}>
            <ToolBarGroup width={818} items="new open | save printG print2 | undo redo | pencil | lock | run runFrame runCurve | zoomBox zoomFull zoomBack zoomIn zoomOut | hand | threeD plan elev rotate glasses | up down | shrink check | assign" />
            <ToolBarGroup width={234} items="portal table frame2 frame3 vg | bolt | wave wave2" />
          </ToolRow>
          <ToolRow>
            <ToolBarGroup width={137} items="snapX grayMove grayTri | graySwap" />
            <ToolBarGroup width={312} items="curveE sectionTI slab | resp timeh | loadDE grayCurve grayWave | combo | help" />
            <ToolBarGroup width={252} items="iBeam v | column v | tee v | truss v | channel v" />
            <ToolBarGroup width={220} items="shellMesh shellBox shellCross shellLocal | pier spandrel | shellLoad" />
            <ToolBarGroup width={163} items="iRelease hinge offset axes | steps" />
          </ToolRow>

          <Work>
            <SideBar>
              <SideGroup>
                <SideGrip />
                <SideItems active="pointer" items="pointer reshape | line lineBox colBox beamBox brace | poly rect rectDot wall wallBox windows opening |" />
                <SideMore aria-label="More drawing tools"><LeftCaret /></SideMore>
              </SideGroup>
              <SideGroup>
                <SideGrip />
                <SideItems items="all ps clr lineSel |" />
                <SideMore aria-label="More selection tools"><LeftCaret /></SideMore>
              </SideGroup>
              <SideGroup $last>
                <SideGrip />
                <SideItems active="snap1" items="snap1 snap2 snap3" />
                <SideMore $bottom aria-label="More snap tools">
                  <LeftCaret />
                  <svg width="8" height="9" viewBox="0 0 8 9" fill="none" stroke="#111" strokeWidth="1.500"><path d="m1 1 3 2 3-2M1 5l3 3 3-3" /></svg>
                </SideMore>
              </SideGroup>
            </SideBar>

            <Child>
              <ChildTitle>
                <AppIcon w={23} h={22} />
                <ChildName>Plan View - GR - Elevation 3</ChildName>
                <ChildButtons>
                  <ChildButton aria-label="Minimize plan">
                    <svg width="16" height="16" viewBox="0 0 16 16"><path d="M1 9h14v5H1z" fill="#fff" stroke="#4b5c70" /></svg>
                  </ChildButton>
                  <ChildButton aria-label="Maximize plan">
                    <svg width="16" height="16" viewBox="0 0 16 16" fill="#fff" stroke="#4b5c70" strokeWidth="1.300"><path d="M1 2h14v12H1z" /><path d="M6 6h5v4H6z" /></svg>
                  </ChildButton>
                  <ChildButton $close aria-label="Close plan">
                    <svg width="16" height="16" viewBox="0 0 20 20"><path d="M2 3h5l3 4 3-4h5l-5 7 5 7h-5l-3-4-3 4H2l5-7z" fill="#fff" stroke="#6b2b2b" /></svg>
                  </ChildButton>
                </ChildButtons>
              </ChildTitle>
              <Canvas><PlanDrawing /></Canvas>
            </Child>
          </Work>

          <StatusBar>
            <StatusText>Plan View - GR - Elevation 3</StatusText>
            <Coordinates>X22.78&nbsp; Y-1.17&nbsp; Z3.00</Coordinates>
            <StorySelect aria-label="Story mode" defaultValue="one"><option value="one">One S</option></StorySelect>
            <Tip role="tooltip">Solve PC issues: 1 important message</Tip>
          </StatusBar>

          <TaskBar>
            <Swoosh width="160" height="51" viewBox="0 0 160 51" aria-hidden="true">
              <path d="M10 0q80 8 130 56" fill="none" stroke="#85bdf2" strokeWidth="7" />
            </Swoosh>
            <TaskButton $w={74} aria-label="Start"><StartOrb /></TaskButton>
            <TaskButton $w={84} aria-label="Internet Explorer"><IeIcon /></TaskButton>
            <TaskButton $w={76} $open aria-label="Windows Explorer"><ExplorerIcon /></TaskButton>
            <TaskButton $w={76} aria-label="Media Player"><MediaIcon /></TaskButton>
            <TaskButton $w={84} aria-label="Chrome"><ChromeIcon /></TaskButton>
            <TaskButton $w={76} aria-label="Opera"><OperaIcon /></TaskButton>
            <TaskButton $w={80} aria-label="Programs"><FileIcon /></TaskButton>
            <TaskButton $w={66} $open $stack aria-label="ETABS"><AppIcon w={46} h={42} /></TaskButton>
            <TaskButton $w={75} $open aria-label="Word"><WordIcon /></TaskButton>
            <Tray>
              <TrayButton $w={42} aria-label="Show hidden icons">
                <svg width="12" height="6" viewBox="0 0 12 6"><path d="M6 0 12 6H0z" fill="#fff" /></svg>
              </TrayButton>
              <TrayButton $w={32} $line aria-label="Action center">
                <svg width="22" height="24" viewBox="0 0 22 24"><path d="M2 2v20" stroke="#fff" strokeWidth="2" /><path d="M3 3q4-2 7 1t7 0v9q-4 2-7 0t-7 0z" fill="#fff" /><Alert x={15} y={17} /></svg>
              </TrayButton>
              <TrayButton $w={34} aria-label="Network">
                <svg width="22" height="24" viewBox="0 0 22 24"><path d="M7 5h14v12H7z" fill="#33556e" stroke="#dfe9f0" strokeWidth="1.500" /><path d="M1 1h6v8H1zM4 9v10h8" fill="#bcc" stroke="#eef" strokeWidth="1.500" /><path d="m16 11 6 11H10z" fill="#f7e23a" stroke="#6b6212" /><path d="M16 14v4M16 19v2" stroke="#222" strokeWidth="1.500" /></svg>
              </TrayButton>
              <TrayButton $w={34} aria-label="Volume">
                <svg width="22" height="24" viewBox="0 0 22 24"><path d="M2 8h3v8H2zM6 8l6-6v20l-6-6z" fill="#fff" /><Alert x={15} y={16} /></svg>
              </TrayButton>
              <Clock>13:24<br />26-10-2018</Clock>
              <ShowDesktop aria-label="Show desktop" />
            </Tray>
          </TaskBar>
        </Desktop>
      </Slide>
    </>
  );
}
